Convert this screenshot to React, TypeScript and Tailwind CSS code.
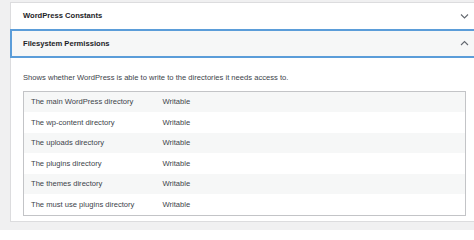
import React from 'react'

// Site Health info — accordion with the Filesystem Permissions section open

const rows = [
  'The main WordPress directory',
  'The wp-content directory',
  'The uploads directory',
  'The plugins directory',
  'The themes directory',
  'The must use plugins directory',
]

function Chevron({ up }: { up?: boolean }) {
  return (
    <svg width="9" height="6" viewBox="0 0 9 6" fill="none" className="text-[#646970]">
      <path
        d={up ? 'M1 5L4.5 1.5L8 5' : 'M1 1.5L4.5 5L8 1.5'}
        stroke="currentColor"
        strokeWidth="1.1"
      />
    </svg>
  )
}

export default function App() {
  return (
    <div
      className="w-[474px] h-[230px] overflow-hidden bg-[#f0f0f1] pt-[2px] pl-[10px]"
      style={{ fontFamily: '"Liberation Sans", Arial, sans-serif' }}
    >
      <div className="w-[500px] bg-white border border-r-0 border-[#dcdcde]">
        <button className="w-full h-[26px] flex items-center text-left">
          <div className="w-[458px] flex items-center justify-between pl-[12px]">
            <span className="text-[7.6px] font-bold text-[#1d2327]">WordPress Constants</span>
            <Chevron />
          </div>
        </button>
        <button className="w-[calc(100%+1px)] h-[29px] -ml-px flex items-center bg-[#f6f7f7] border-2 border-r-0 border-[#5b9dd9] text-left">
          <div className="w-[457px] flex items-center justify-between pl-[11px]">
            <span className="text-[7.6px] font-bold text-[#1d2327]">Filesystem Permissions</span>
            <Chevron up />
          </div>
        </button>
        <div className="pl-[12px] pt-[15px] pb-[5px]">
          <p className="text-[7.6px] text-[#3c434a] leading-[10px]">
            Shows whether WordPress is able to write to the directories it needs access to.
          </p>
          <table className="mt-[8px] w-[443px] border border-[#c3c4c7] border-collapse text-[7.6px] text-[#3c434a]">
            <tbody>
              {rows.map((r, i) => (
                <tr key={r} className={i % 2 === 0 ? 'bg-[#f6f7f7] h-[20.6px]' : 'bg-white h-[20.6px]'}>
                  <td className="w-[139px] pl-[7px] py-0">{r}</td>
                  <td className="py-0">Writable</td>
                </tr>
              ))}
            </tbody>
          </table>
        </div>
      </div>
    </div>
  )
}
